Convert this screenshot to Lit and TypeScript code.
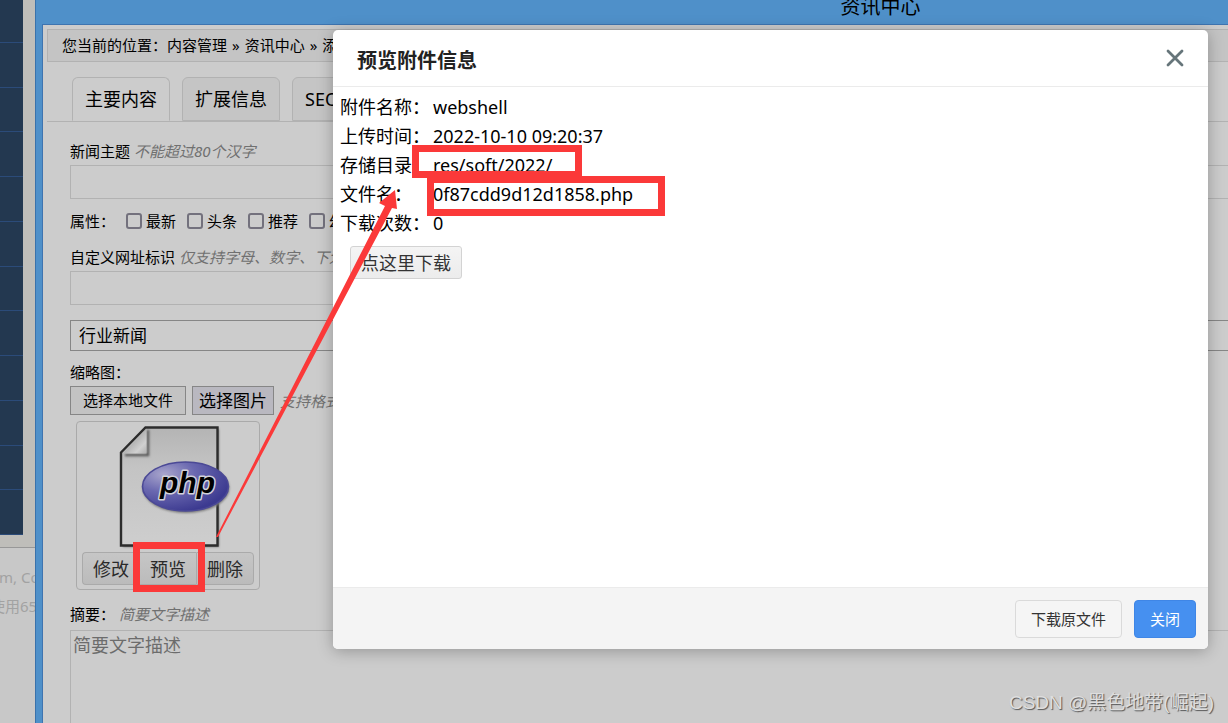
import { LitElement, html, css, svg } from "lit";
import { customElement, property } from "lit/decorators.js";

@customElement("php-file-icon")
class PhpFileIcon extends LitElement {
  static styles = css`
    :host { display: block; }
    svg { display: block; width: 100%; height: auto; }
    .word {
      font: italic bold 30px "Liberation Sans", sans-serif;
      stroke: #d2d2da;
      stroke-width: 3px;
      paint-order: stroke;
      stroke-linejoin: round;
    }
  `;
  render() {
    return html`
      <svg viewBox="82 422 172 130" role="img" aria-label="php">
        <defs>
          <linearGradient id="paper" x1="0" y1="0" x2="0" y2="1">
            <stop offset="0" stop-color="#b4b4b4" />
            <stop offset=".35" stop-color="#c4c4c4" />
            <stop offset="1" stop-color="#cecece" />
          </linearGradient>
          <linearGradient id="fold" x1="0" y1="0" x2="1" y2="1">
            <stop offset=".4" stop-color="#aaaaaa" />
            <stop offset=".75" stop-color="#d0d0d0" />
            <stop offset="1" stop-color="#b0b0b0" />
          </linearGradient>
          <radialGradient id="oval" cx=".25" cy=".25" r=".8">
            <stop offset="0" stop-color="#a9a6cc" />
            <stop offset=".45" stop-color="#6a68b0" />
            <stop offset="1" stop-color="#3c3a90" />
          </radialGradient>
          <filter id="soft" x="-20%" y="-20%" width="140%" height="140%">
            <feGaussianBlur stdDeviation="1" />
          </filter>
        </defs>
        <path d="M123 454 L147 429 H219 V547 H123 Z" fill="#777" filter="url(#soft)" />
        <path d="M121 452.5 L145.5 427.5 H217.5 V545.5 H121 Z" fill="url(#paper)" stroke="#2c2c2c" stroke-width="2.4" />
        <path d="M125 455 H148 V430" fill="none" stroke="#555" stroke-width="2.4" filter="url(#soft)" />
        <path d="M123 453.5 L146.5 429.5 V453.5 Z" fill="url(#fold)" />
        <ellipse cx="186" cy="488" rx="43.5" ry="25" fill="#777" filter="url(#soft)" />
        <ellipse cx="185.5" cy="486.5" rx="43" ry="24.5" fill="url(#oval)" stroke="#4b4996" stroke-width="1.6" />
        <text class="word" x="160" y="493">php</text>
      </svg>
    `;
  }
}

@customElement("check-item")
class CheckItem extends LitElement {
  @property() label = "";
  static styles = css`
    :host { display: block; }
    label { display: flex; align-items: center; gap: 4px; white-space: nowrap; }
    input {
      appearance: none;
      box-sizing: border-box;
      width: 16px;
      height: 16px;
      margin: 0;
      border: 2px solid #73717d;
      border-radius: 3px;
    }
  `;
  render() {
    return html`<label><input type="checkbox" />${this.label}</label>`;
  }
}

@customElement("preview-dialog")
class PreviewDialog extends LitElement {
  private rows = [
    ["附件名称：", "webshell"],
    ["上传时间：", "2022-10-10 09:20:37"],
    ["存储目录：", "res/soft/2022/"],
    ["文件名：", "0f87cdd9d12d1858.php"],
    ["下载次数：", "0"],
  ];
  static styles = css`
    :host {
      display: block;
      background: #fff;
      border-radius: 5px;
      overflow: hidden;
      box-shadow: 0 2px 16px rgba(0, 0, 0, 0.28);
      color: #000;
    }
    button { font: inherit; cursor: pointer; box-sizing: border-box; }
    header {
      display: flex;
      align-items: center;
      justify-content: space-between;
      height: 56px;
      padding: 0 24px;
      border-bottom: 1px solid #ebebeb;
    }
    h2 { margin: 0; padding-top: 5px; font-size: 20px; line-height: 28px; font-weight: 700; color: #222; }
    .close { display: block; width: 18px; height: 18px; padding: 0; border: 0; background: none; }
    .close svg { display: block; }
    .body { min-height: 500px; box-sizing: border-box; padding: 6px 7px; font-size: 18px; }
    dl { display: grid; grid-template-columns: 93px 1fr; margin: 0; line-height: 29px; }
    dt { white-space: nowrap; }
    dd { margin: 0; }
    .download {
      display: block;
      height: 33px;
      margin: 8px 10px;
      padding: 0 10px;
      line-height: 30px;
      border: 1px solid #d3d3d3;
      border-radius: 3px;
      background: linear-gradient(#f4f4f4, #ececec);
      color: #333;
    }
    footer {
      display: flex;
      justify-content: flex-end;
      gap: 12px;
      padding: 12px 12px 11px;
      border-top: 1px solid #ebebeb;
      background: #f4f4f4;
      font-size: 15px;
    }
    footer button {
      height: 38px;
      padding: 0 15px;
      border: 1px solid #dadada;
      border-radius: 4px;
      background: #f5f5f5;
      color: #333;
    }
    footer .primary { border-color: #3f86e6; background: #4690f0; color: #fff; }
  `;
  render() {
    return html`
      <header>
        <h2>预览附件信息</h2>
        <button class="close" aria-label="关闭">
          <svg width="18" height="18" viewBox="0 0 18 18">
            <path d="M2 2 L16 16 M16 2 L2 16" stroke="#66757a" stroke-width="2.8" stroke-linecap="round" />
          </svg>
        </button>
      </header>
      <div class="body">
        <dl>${this.rows.map(([k, v]) => html`<dt>${k}</dt><dd>${v}</dd>`)}</dl>
        <button class="download">点这里下载</button>
      </div>
      <footer>
        <button>下载原文件</button>
        <button class="primary">关闭</button>
      </footer>
    `;
  }
}

@customElement("app-root")
class AppRoot extends LitElement {
  static styles = css`
    :host {
      display: block;
      position: relative;
      height: 100vh;
      overflow: hidden;
      background: #c8c8c8;
      color: #000;
      font-family: "Noto Sans", "Noto Sans CJK SC", sans-serif;
      font-size: 15px;
      line-height: 22px;
    }
    .page { display: flex; height: 100%; }
    aside { flex: none; width: 35px; overflow: hidden; white-space: nowrap; }
    .side { background: #bfbeba; border-bottom: 1px solid #989898; padding-bottom: 12px; }
    nav { display: flex; flex-direction: column; width: 23px; height: 537px; margin-top: -2px; background: #233850; }
    nav a { flex: 1; border-bottom: 1px solid #2b4b79; }
    .copy { margin: 0 0 0 -10px; padding-top: 15px; font-size: 15px; line-height: 29px; color: #a2a2a2; }
    .copy span { display: block; }
    .copy .host { padding-left: 9px; }
    .window {
      flex: 1;
      min-width: 0;
      display: flex;
      flex-direction: column;
      background: #4f90c9;
      border-left: 1px solid #3a72ab;
      padding-left: 6px;
    }
    .title { height: 24px; padding-left: 40vw; text-align: center; font-size: 20px; line-height: 14px; }
    .content {
      flex: 1;
      min-height: 0;
      display: flex;
      flex-direction: column;
      border: solid #3e74b0;
      border-width: 1px 0 0 1px;
      background: #ccc;
      padding: 4px 0 0 4px;
    }
    .crumbs {
      display: flex;
      gap: 5px;
      border: 1px solid #b2b2b2;
      border-right: 0;
      background: #c4c4c4;
      padding: 4px 14px 5px;
      white-space: nowrap;
    }
    .crumbs a { color: inherit; text-decoration: none; }
    .tabs { display: flex; gap: 12px; margin-top: 15px; padding-left: 25px; border-bottom: 1px solid #b2b2b2; font-size: 18px; }
    .tabs button {
      font: inherit;
      color: inherit;
      height: 44px;
      padding: 0 12px;
      border: 1px solid #b2b2b2;
      border-radius: 6px 6px 0 0;
      background: #c5c5c5;
    }
    .tabs .on { background: #ccc; border-bottom-color: #ccc; }
    form { flex: 1; min-height: 0; display: flex; flex-direction: column; padding: 18px 0 0 23px; white-space: nowrap; }
    em { color: #707070; }
    input[type="text"], select, textarea { font: inherit; color: inherit; box-sizing: border-box; margin: 0; border-radius: 0; }
    input[type="text"] { height: 34px; margin-top: 3px; border: 1px solid #b2b2b2; border-right: 0; background: #ccc; }
    input.short { width: 75%; border-right: 1px solid #b2b2b2; }
    .attrs { display: flex; align-items: center; gap: 11px; margin: 11px 0 14px; }
    .attrs span { min-width: 45px; }
    select {
      appearance: none;
      height: 31px;
      margin-top: 15px;
      padding: 0 8px;
      border: 1px solid #868686;
      border-right: 0;
      background: #ccc;
      font-size: 17px;
    }
    .thumb { margin-top: 10px; }
    .files { display: flex; align-items: center; gap: 6px; margin-top: 3px; }
    .files button { font: inherit; color: inherit; height: 29px; padding: 0 12px; line-height: 27px; border: 1px solid #868686; background: #c3c3c3; }
    .files .pick { padding: 0 6px; font-size: 17px; background: #b9b8c0; }
    .card {
      align-self: flex-start;
      margin: 6px 0 13px 6px;
      padding: 0 5px 4px;
      border: 1px solid #aaa;
      border-radius: 4px;
      width: 172px;
    }
    .group { display: flex; }
    .group button {
      flex: 1;
      font: inherit;
      font-size: 18px;
      height: 33px;
      padding: 0;
      line-height: 30px;
      color: #2a2a2a;
      border: 1px solid #aaa;
      border-right-width: 0;
      background: linear-gradient(#c6c6c6, #bbb);
    }
    .group button:first-child { border-radius: 4px 0 0 4px; }
    .group button:last-child { border-radius: 0 4px 4px 0; border-right-width: 1px; }
    textarea {
      flex: 1;
      min-height: 0;
      margin-top: 5px;
      padding: 2px;
      border: 1px solid #b2b2b2;
      border-width: 1px 0 0 1px;
      background: #ccc;
      font-size: 18px;
      line-height: 25px;
      resize: none;
    }
    textarea::placeholder { color: #6c6c6c; opacity: 1; }
    preview-dialog { position: absolute; left: 333px; right: 20px; top: 30px; }
    .marks { position: absolute; left: 0; top: 0; pointer-events: none; overflow: visible; }
    .watermark {
      position: absolute;
      right: 14px;
      bottom: 7px;
      font: 19px/26px "Liberation Sans", "Noto Sans CJK SC", sans-serif;
      color: #dedede;
      text-shadow: 1px 1px 1px #555;
    }
  `;
  render() {
    return html`
      <div class="page">
        <aside>
          <div class="side"><nav>${Array.from({ length: 12 }, () => html`<a href="#"></a>`)}</nav></div>
          <p class="copy"><span class="host">m, Co</span><span>使用65</span></p>
        </aside>
        <main class="window">
          <div class="title">资讯中心</div>
          <div class="content">
            <div class="crumbs">
              <div>您当前的位置：<a href="#">内容管理</a></div>
              <span>»</span><a href="#">资讯中心</a><span>»</span><a href="#">添加</a>
            </div>
            <div class="tabs">
              <button class="on">主要内容</button>
              <button>扩展信息</button>
              <button>SEO</button>
            </div>
            <form>
              <label for="subject">新闻主题 <em>不能超过80个汉字</em></label>
              <input id="subject" type="text" />
              <div class="attrs">
                <span>属性：</span>
                ${["最新", "头条", "推荐", "幻灯"].map((t) => html`<check-item label=${t}></check-item>`)}
              </div>
              <label for="slug">自定义网址标识 <em>仅支持字母、数字、下划线</em></label>
              <input id="slug" class="short" type="text" />
              <select aria-label="分类"><option>行业新闻</option></select>
              <div class="thumb">缩略图：</div>
              <div class="files">
                <button type="button">选择本地文件</button>
                <button type="button" class="pick">选择图片</button>
                <em>支持格式</em>
              </div>
              <div class="card">
                <php-file-icon></php-file-icon>
                <div class="group">
                  <button type="button">修改</button>
                  <button type="button">预览</button>
                  <button type="button">删除</button>
                </div>
              </div>
              <label for="summary">摘要： <em>简要文字描述</em></label>
              <textarea id="summary" placeholder="简要文字描述"></textarea>
            </form>
          </div>
        </main>
      </div>
      <preview-dialog role="dialog" aria-label="预览附件信息"></preview-dialog>
      <svg class="marks" width="680" height="600" aria-hidden="true">
        ${svg`
          <g fill="none" stroke="#fb3939" stroke-width="7">
            <rect x="415.5" y="148.5" width="163" height="26" />
            <rect x="430.5" y="179.5" width="231" height="33" />
            <rect x="136.5" y="545.5" width="65" height="43" />
          </g>
          <path d="M216 537 L385 206 L379 203 L395 190 L397 209 L392 208 L218 537 Z" fill="#fb3939" />
        `}
      </svg>
      <div class="watermark">CSDN @黑色地带(崛起)</div>
    `;
  }
}
